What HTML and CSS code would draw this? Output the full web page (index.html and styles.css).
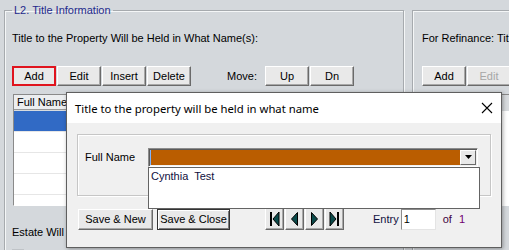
FILE: index.html
```html
<!DOCTYPE html>
<html lang="en">
<head>
    <meta charset="UTF-8">
    <title>Title Information</title>
    <link rel="stylesheet" href="styles.css">
</head>
<body>
    <div class="window">
        <fieldset class="group group-left">
            <legend>L2. Title Information</legend>
            <p class="prompt">Title to the Property Will be Held in What Name(s):</p>
            <div class="toolbar">
                <button class="btn btn-focus">Add</button>
                <button class="btn">Edit</button>
                <button class="btn">Insert</button>
                <button class="btn">Delete</button>
                <span class="move-label">Move:</span>
                <button class="btn">Up</button>
                <button class="btn">Dn</button>
            </div>
            <div class="grid">
                <div class="grid-head"><span class="grid-col">Full Name</span></div>
                <div class="grid-row selected"></div>
                <div class="grid-row"></div>
                <div class="grid-row"></div>
                <div class="grid-row"></div>
            </div>
            <p class="prompt estate">Estate Will be Held in:</p>
            <span class="check"></span>
        </fieldset>

        <fieldset class="group group-right">
            <p class="prompt">For Refinance: Title is Currently Held in What Name(s):</p>
            <div class="toolbar">
                <button class="btn">Add</button>
                <button class="btn" disabled>Edit</button>
            </div>
            <div class="grid">
                <div class="grid-head"><span class="grid-col">Full Name</span></div>
            </div>
        </fieldset>
    </div>

    <!-- Add name dialog -->
    <div class="dialog">
        <div class="dialog-title">
            <span>Title to the property will be held in what name</span>
            <svg class="close" width="12" height="12" viewBox="0 0 12 12">
                <path d="M1 1 L11 11 M11 1 L1 11" stroke="#000" stroke-width="1.1" fill="none"/>
            </svg>
        </div>
        <div class="dialog-body">
            <fieldset class="inner-group">
                <label class="field-label">Full Name</label>
                <div class="combo">
                    <div class="combo-field"></div>
                    <span class="combo-btn">
                        <svg width="9" height="5" viewBox="0 0 9 5"><path d="M1 0 H8 L4.5 4 Z" fill="#000"/></svg>
                    </span>
                    <ul class="combo-list">
                        <li>Cynthia&nbsp; Test</li>
                    </ul>
                </div>
            </fieldset>

            <div class="dialog-footer">
                <button class="btn btn-save">Save &amp; New</button>
                <button class="btn btn-save btn-default">Save &amp; Close</button>

                <div class="nav">
                    <button class="nav-btn">
                        <svg width="11" height="16" viewBox="0 0 11 16"><rect x="1" y="1" width="2" height="14" fill="#000"/><path d="M10 1 L4 8 L10 15 Z" fill="#0b4a4a" stroke="#000" stroke-width="1"/></svg>
                    </button>
                    <button class="nav-btn">
                        <svg width="9" height="16" viewBox="0 0 9 16"><path d="M7.5 1.5 L1.5 8 L7.5 14.5 Z" fill="#0b4a4a" stroke="#000" stroke-width="1"/></svg>
                    </button>
                    <button class="nav-btn">
                        <svg width="9" height="16" viewBox="0 0 9 16"><path d="M1.5 1.5 L7.5 8 L1.5 14.5 Z" fill="#0b4a4a" stroke="#000" stroke-width="1"/></svg>
                    </button>
                    <button class="nav-btn">
                        <svg width="11" height="16" viewBox="0 0 11 16"><path d="M1 1 L7 8 L1 15 Z" fill="#0b4a4a" stroke="#000" stroke-width="1"/><rect x="8" y="1" width="2" height="14" fill="#000"/></svg>
                    </button>
                </div>

                <span class="entry-label">Entry</span>
                <input class="entry-input" type="text" value="1">
                <span class="of-label">of</span>
                <span class="of-count">1</span>
            </div>
        </div>
    </div>
</body>
</html>
```

FILE: styles.css
```css
body {
    margin: 0;
    width: 509px;
    height: 250px;
    overflow: hidden;
    background-color: #d4d8dc;
    font-family: 'Liberation Sans', Arial, sans-serif;
    font-size: 11px;
    color: #000;
}

.window {
    display: flex;
    gap: 8px;
    width: 509px;
    height: 250px;
    overflow: hidden;
    padding: 4px 0 0 4px;
    box-sizing: border-box;
}

/* Group boxes */
.group {
    margin: 0;
    padding: 0 0 0 7px;
    border: 1px solid #a6aaae;
    box-shadow: inset 1px 1px 0 #f4f6f7, 1px 1px 0 #f4f6f7;
    height: 256px;
    box-sizing: border-box;
    min-width: 0;
}

.group legend {
    padding: 0 2px;
    margin-left: 0;
    line-height: 13px;
    color: #1f2a8c;
}

.group-left {
    width: 400px;
    flex: none;
}

.group-right {
    width: 200px;
    flex: none;
    margin-top: 6px;
    padding-left: 9px;
}

.prompt {
    margin: 15px 0 0 0;
    line-height: 13px;
    white-space: nowrap;
}

.group-right .prompt {
    margin-top: 21px;
}

.toolbar {
    display: flex;
    align-items: center;
    margin-top: 21px;
}

/* Classic 3D buttons */
.btn {
    font-family: 'Liberation Sans', Arial, sans-serif;
    font-size: 11px;
    color: #000;
    width: 44px;
    height: 20px;
    margin: 0 1px 0 0;
    padding: 0;
    background-color: #e9e9e9;
    border: 1px solid;
    border-color: #fff #6a6a6a #6a6a6a #fff;
    box-shadow: inset -1px -1px 0 #a8a8a8;
    white-space: nowrap;
}

.btn:disabled {
    color: #a6a6a6;
}

.btn-focus {
    border: 2px solid #e0141e;
    box-shadow: none;
}

.move-label {
    margin: 0 8px 0 35px;
}

/* List behind the dialog */
.grid {
    margin: 8px 0 0 1px;
    width: 380px;
    height: 112px;
    background-color: #fff;
    border: 1px solid;
    border-color: #8a8a8a #fff #fff #8a8a8a;
    box-sizing: border-box;
}

.grid-head {
    height: 16px;
    background-color: #d8dbde;
}

.grid-col {
    display: inline-block;
    height: 15px;
    line-height: 15px;
    width: 60px;
    padding-left: 3px;
    box-sizing: border-box;
    white-space: nowrap;
    background-color: #eceef0;
    border-right: 1px solid #9a9a9a;
    border-bottom: 1px solid #9a9a9a;
}

.grid-row {
    height: 20px;
    border-bottom: 1px solid #e6e6e6;
}

.grid-row.selected {
    background-color: #316ac5;
}

.estate {
    margin-top: 20px;
}

.check {
    display: block;
    margin-top: 10px;
    width: 12px;
    height: 12px;
    background-color: #bfc3c7;
}

/* Dialog */
.dialog {
    position: absolute;
    left: 66px;
    top: 92px;
    width: 436px;
    height: 156px;
    box-sizing: border-box;
    border: 1px solid #5f5f5f;
    background-color: #f0f0f0;
    box-shadow: 1px 1px 4px rgba(0, 0, 0, 0.35);
}

.dialog-title {
    display: flex;
    align-items: center;
    justify-content: space-between;
    height: 30px;
    padding: 0 8px 0 8px;
    background-color: #fff;
    font-family: 'Noto Sans', 'Open Sans', sans-serif;
    font-size: 11.3px;
    color: #000;
}

.dialog-body {
    padding: 11px 10px 0 10px;
}

.inner-group {
    display: flex;
    align-items: flex-start;
    margin: 0;
    padding: 13px 0 0 7px;
    width: 414px;
    height: 62px;
    box-sizing: border-box;
    border: 1px solid #c6c6c6;
    box-shadow: inset 1px 1px 0 #fff, 1px 1px 0 #fff;
}

.field-label {
    width: 63px;
    line-height: 19px;
    color: #000;
}

.combo {
    position: relative;
    display: flex;
    width: 330px;
    height: 19px;
    box-sizing: border-box;
    border: 1px solid;
    border-color: #8c8c8c #fff #fff #8c8c8c;
    box-shadow: inset 1px 1px 0 #5a5a5a;
}

.combo-field {
    flex: 1;
    margin: 1px 0 1px 1px;
    background-color: #ba5d00;
    border-left: 1px solid #7fb4ff;
}

.combo-btn {
    display: flex;
    align-items: center;
    justify-content: center;
    width: 16px;
    margin: 1px 1px 1px 0;
    background-color: #e9e9e9;
    border: 1px solid;
    border-color: #fff #6a6a6a #6a6a6a #fff;
    box-sizing: border-box;
}

.combo-list {
    position: absolute;
    left: -1px;
    top: 18px;
    width: 332px;
    height: 42px;
    margin: 0;
    padding: 0 0 0 2px;
    list-style: none;
    box-sizing: border-box;
    background-color: #fff;
    border: 1px solid #646464;
    color: #101040;
}

.combo-list li {
    line-height: 16px;
}

.dialog-footer {
    display: flex;
    align-items: center;
    margin-top: 12px;
    padding-left: 1px;
    height: 22px;
}

.btn-save {
    width: 75px;
    height: 21px;
    margin-right: 4px;
}

.btn-default {
    width: 73px;
    border-color: #333 #333 #333 #333;
    box-shadow: inset 1px 1px 0 #fff, inset -1px -1px 0 #7a7a7a;
}

.nav {
    display: flex;
    gap: 1px;
    margin-left: 31px;
}

.nav-btn {
    display: flex;
    align-items: center;
    justify-content: center;
    width: 19px;
    height: 22px;
    padding: 0;
    background-color: #e9e9e9;
    border: 1px solid;
    border-color: #fff #6a6a6a #6a6a6a #fff;
    box-shadow: inset -1px -1px 0 #a8a8a8;
}

.entry-label {
    margin-left: 29px;
    color: #101040;
}

.entry-input {
    width: 35px;
    height: 21px;
    margin-left: 2px;
    padding: 0 0 0 2px;
    box-sizing: border-box;
    font-family: 'Liberation Sans', Arial, sans-serif;
    font-size: 11px;
    background-color: #fff;
    border: 1px solid;
    border-color: #8c8c8c #e4e4e4 #e4e4e4 #8c8c8c;
    outline: none;
}

.of-label {
    margin-left: 7px;
    color: #400040;
}

.of-count {
    margin-left: 7px;
    color: #700070;
}
```
